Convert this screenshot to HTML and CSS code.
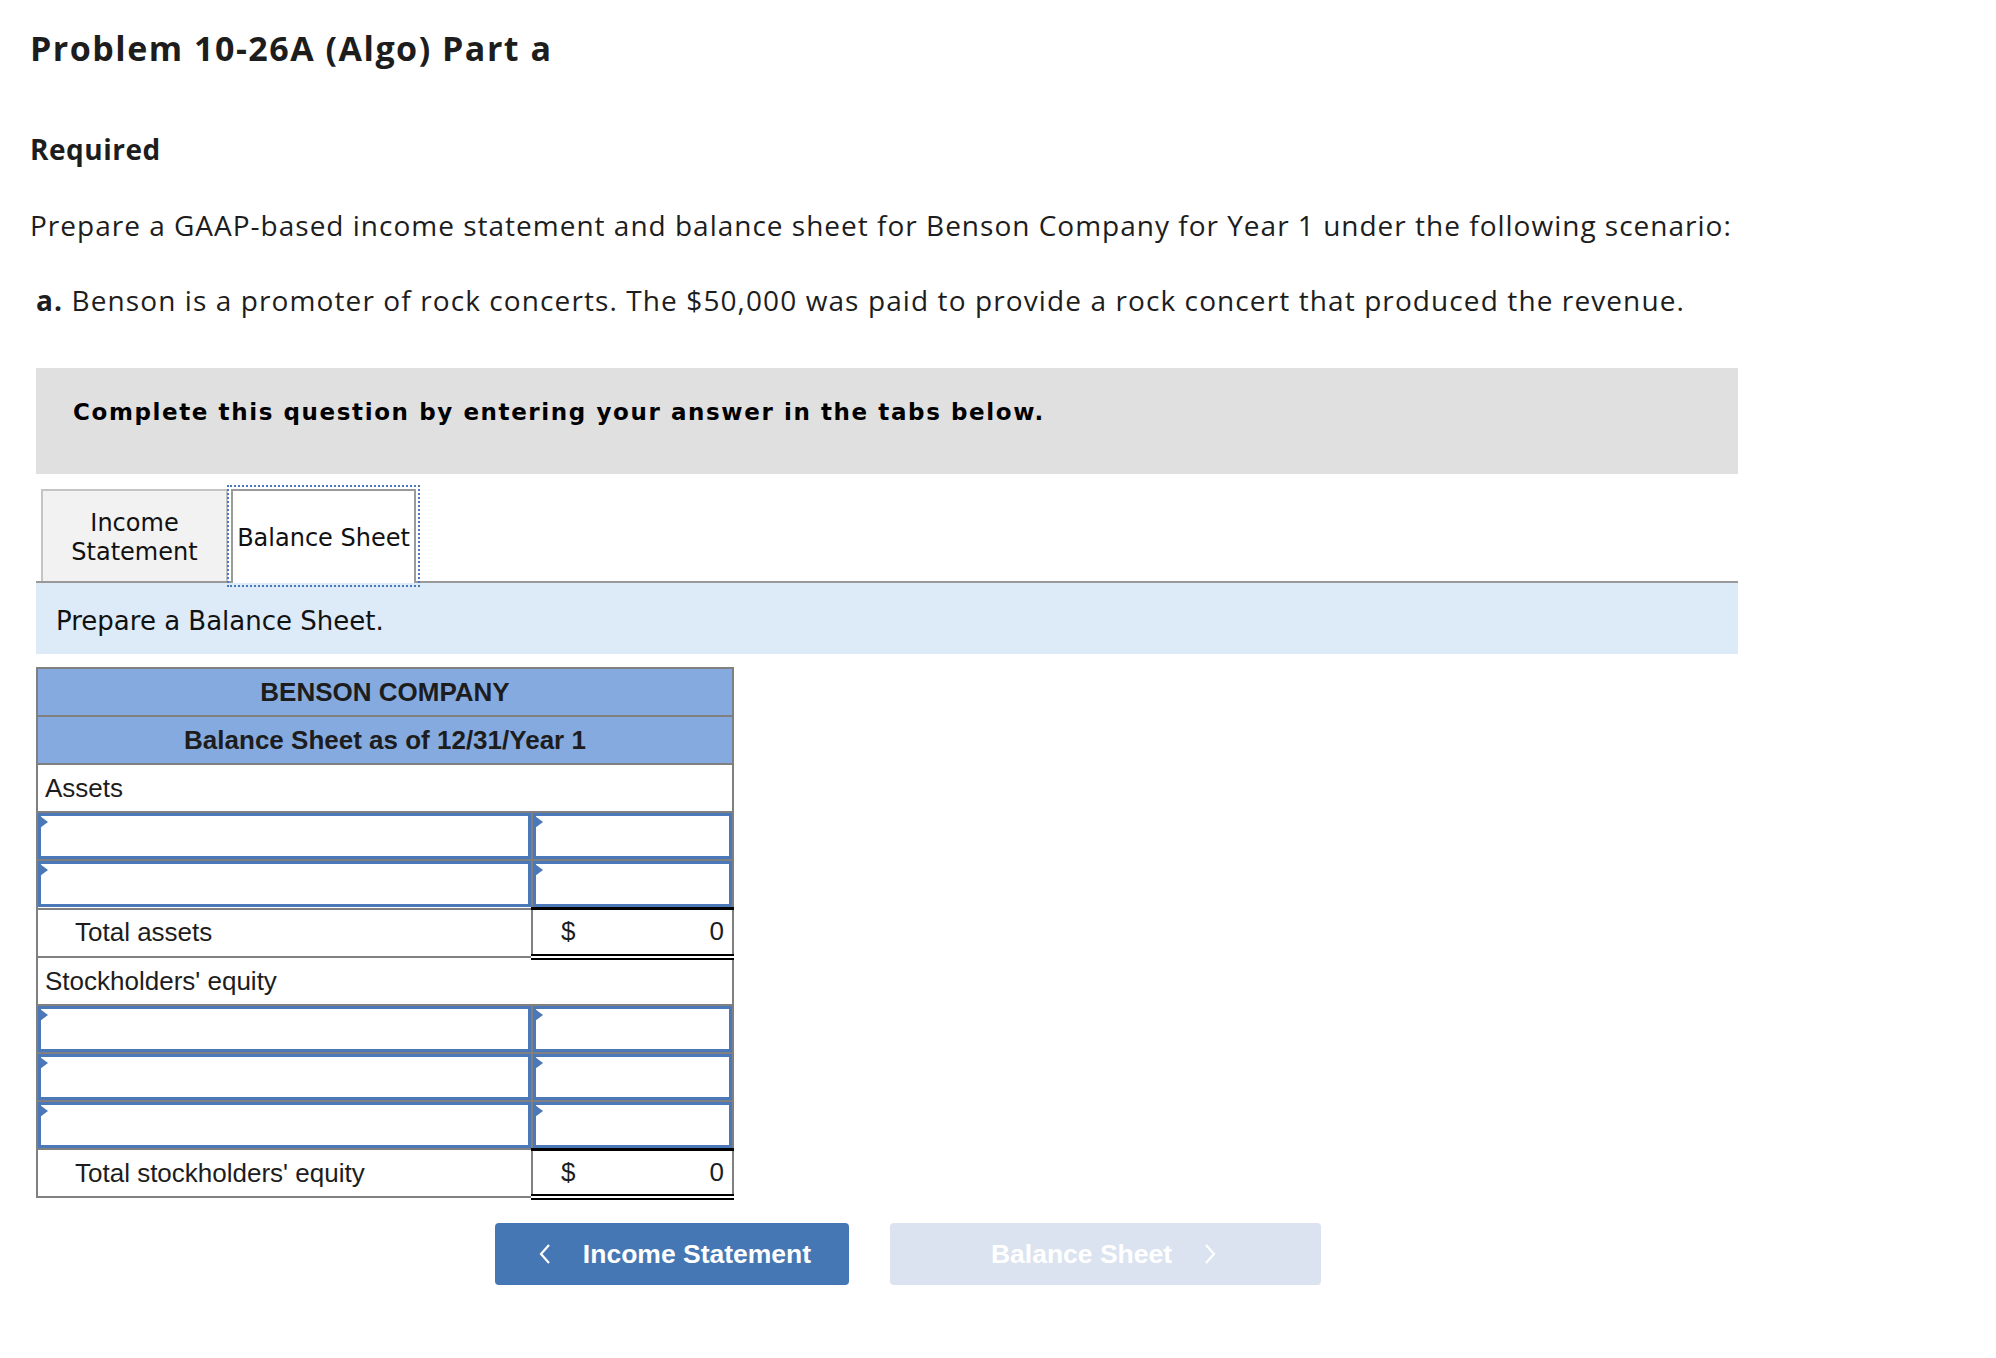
FILE: index.html
```html
<!DOCTYPE html>
<html>
<head>
<meta charset="utf-8">
<title>Problem 10-26A (Algo) Part a</title>
<link rel="stylesheet" href="styles.css">
</head>
<body>
<div class="page">
  <h1 class="title">Problem 10-26A (Algo) Part a</h1>
  <h2 class="req">Required</h2>
  <p class="intro">Prepare a GAAP-based income statement and balance sheet for Benson Company for Year 1 under the following scenario:</p>
  <p class="scenario"><strong class="lbl">a.</strong> Benson is a promoter of rock concerts. The $50,000 was paid to provide a rock concert that produced the revenue.</p>

  <div class="question">
    <div class="instr">Complete this question by entering your answer in the tabs below.</div>
    <div class="tabs">
      <div class="tab">Income<br>Statement</div>
      <div class="tab active">Balance Sheet</div>
    </div>
    <div class="band">Prepare a Balance Sheet.</div>

    <table class="bs">
      <colgroup><col class="c1"><col class="c2"></colgroup>
      <tr class="head"><td colspan="2">BENSON COMPANY</td></tr>
      <tr class="head"><td colspan="2">Balance Sheet as of 12/31/Year 1</td></tr>
      <tr><td colspan="2" class="sec">Assets</td></tr>
      <tr><td class="in"><div class="inp"></div></td><td class="in"><div class="inp"></div></td></tr>
      <tr><td class="in"><div class="inp"></div></td><td class="in"><div class="inp"></div></td></tr>
      <tr><td class="tot">Total assets</td><td class="val"><span>$</span><span>0</span></td></tr>
      <tr><td colspan="2" class="sec">Stockholders' equity</td></tr>
      <tr><td class="in"><div class="inp"></div></td><td class="in"><div class="inp"></div></td></tr>
      <tr><td class="in"><div class="inp"></div></td><td class="in"><div class="inp"></div></td></tr>
      <tr><td class="in"><div class="inp"></div></td><td class="in"><div class="inp"></div></td></tr>
      <tr><td class="tot">Total stockholders' equity</td><td class="val"><span>$</span><span>0</span></td></tr>
    </table>

    <div class="nav">
      <button class="btn prev">
        <svg class="chev" viewBox="0 0 12 22" width="12" height="22"><polyline points="10,2 2,11 10,20" fill="none" stroke="#fff" stroke-width="2.2"/></svg>
        <span>Income Statement</span>
      </button>
      <button class="btn next">
        <span>Balance Sheet</span>
        <svg class="chev" viewBox="0 0 12 22" width="12" height="22"><polyline points="2,2 10,11 2,20" fill="none" stroke="#fff" stroke-width="2.2"/></svg>
      </button>
    </div>
  </div>
</div>
</body>
</html>
```

FILE: styles.css
```css
* { box-sizing: border-box; }

body {
  margin: 0;
  background: #fff;
  color: #1d1d1d;
  font-family: "Open Sans", "Lato", sans-serif;
}

.page {
  padding: 30px 0 60px 30px;
  width: 1738px;
}

.title {
  margin: 0;
  font-size: 34px;
  line-height: 36px;
  font-weight: 700;
  letter-spacing: 1.5px;
}

.req {
  margin: 68px 0 0;
  font-size: 28px;
  line-height: 30px;
  font-weight: 700;
  letter-spacing: 0.5px;
}

.intro {
  margin: 44px 0 0;
  font-size: 28px;
  line-height: 34px;
  letter-spacing: 1px;
}

.scenario {
  margin: 41px 0 0;
  padding-left: 6px;
  font-size: 28px;
  line-height: 34px;
  letter-spacing: 1.1px;
}

.lbl { font-weight: 700; }

.question {
  margin: 51px 0 0 6px;
  width: 1702px;
}

.instr {
  height: 106px;
  background: #e0e0e0;
  padding: 29px 0 0 37px;
  font-family: "DejaVu Sans", Verdana, sans-serif;
  font-weight: 700;
  font-size: 23px;
  line-height: 30px;
  letter-spacing: 1.6px;
  color: #000;
}

.tabs {
  margin-top: 15px;
  display: flex;
  padding-left: 5px;
  border-bottom: 2px solid #999;
  height: 94px;
}

.tab {
  width: 187px;
  height: 92px;
  border: 2px solid #c4c4c4;
  border-bottom: none;
  background: #f2f2f2;
  font-family: "DejaVu Sans", Verdana, sans-serif;
  font-size: 24px;
  line-height: 29px;
  color: #111;
  display: flex;
  align-items: center;
  justify-content: center;
  text-align: center;
  padding-top: 3px;
}

.tab.active {
  width: 185px;
  margin-left: 3px;
  background: #fff;
  border-color: #9a9a9a;
  outline: 2px dotted #4a78b8;
  outline-offset: 2px;
  height: 94px;
  margin-bottom: -2px;
  white-space: nowrap;
  padding-top: 2px;
}

.band {
  background: #ddeaf7;
  height: 71px;
  padding: 5px 0 0 20px;
  font-family: "DejaVu Sans", Verdana, sans-serif;
  font-size: 26px;
  line-height: 66px;
  color: #111;
}

.bs {
  margin-top: 13px;
  border-collapse: collapse;
  font-family: "Liberation Sans", Arial, sans-serif;
  font-size: 26px;
  color: #1d1d1d;
}

.c1 { width: 495px; }
.c2 { width: 201px; }

.bs tr { height: 48px; }

.bs td {
  border: 2px solid #808080;
  padding: 0;
  vertical-align: middle;
}

.head td {
  background: #84aadf;
  text-align: center;
  font-weight: 700;
}

.bs td.sec { padding-left: 7px; }

.bs td.tot { padding-left: 37px; }

.in { height: 48px; }

.inp {
  position: relative;
  height: 46px;
  border: 3px solid #4a78b8;
  background: #fff;
}

.inp::before {
  content: "";
  position: absolute;
  left: -1px;
  top: 0;
  border-left: 8px solid #4a78b8;
  border-top: 6px solid transparent;
  border-bottom: 6px solid transparent;
}

.bs td.val {
  border-top: 3px solid #000;
  border-bottom: 6px double #000;
  padding: 0 8px 0 28px;
}

.val span:first-child { float: left; }
.val span:last-child { float: right; }

.nav {
  margin-top: 23px;
  display: flex;
  gap: 41px;
  padding-left: 459px;
}

.btn {
  height: 62px;
  border: none;
  border-radius: 4px;
  display: flex;
  align-items: center;
  justify-content: center;
  gap: 32px;
  font-family: "Liberation Sans", Arial, sans-serif;
  font-weight: 700;
  font-size: 26.5px;
  color: #fff;
  padding: 0;
}

.prev {
  width: 354px;
  background: #4677b5;
  padding-left: 6px;
}

.next {
  width: 431px;
  background: #dae3ef;
  padding-right: 4px;
}

.chev { display: block; }
```
